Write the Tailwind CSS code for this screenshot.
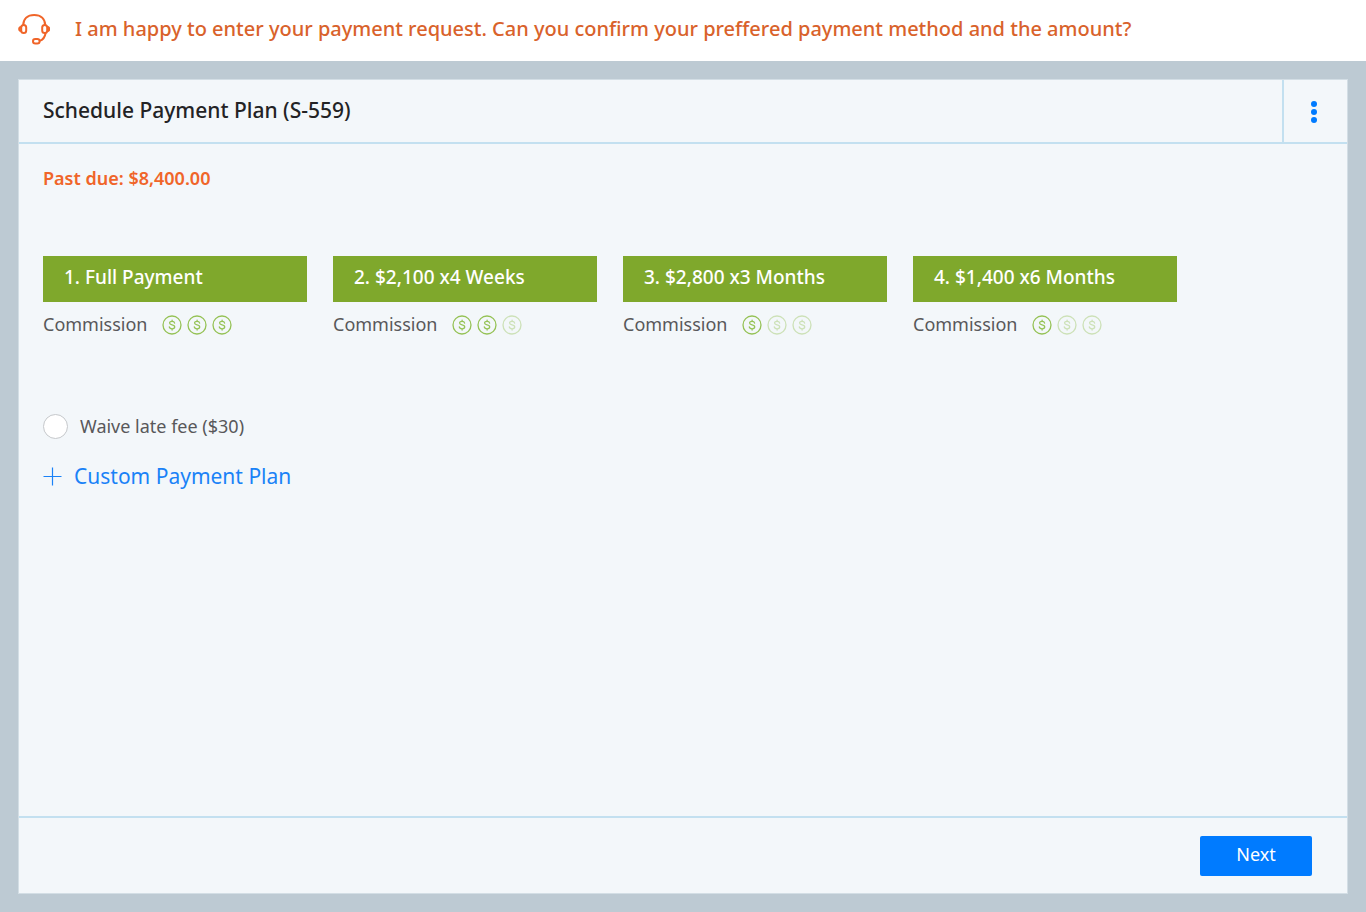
<!DOCTYPE html>
<html lang="en">

<head>
    <meta charset="UTF-8">
    <meta name="viewport" content="width=device-width, initial-scale=1.0">
    <title>Schedule Payment Plan</title>
    <script src="https://cdn.jsdelivr.net/npm/@tailwindcss/browser@4"></script>
</head>

<body class="min-h-screen flex flex-col bg-[#bdcad3] font-['Noto_Sans','Open_Sans',sans-serif] text-lg text-[#58585a]">
    <!-- icons used more than once -->
    <svg class="hidden">
        <symbol id="coin" viewBox="0 0 20 20" fill="none" stroke="currentColor" stroke-linecap="round">
            <circle cx="10" cy="10" r="9" stroke-width="1.3" />
            <path stroke-width="1.3" d="M12.6 8C12.4 6.9 11.5 6.3 10.1 6.3C8.6 6.3 7.6 7 7.6 8.1C7.6 9.2 8.5 9.6 10.1 9.9C11.8 10.2 12.7 10.8 12.7 12C12.7 13.1 11.6 13.8 10.1 13.8C8.5 13.8 7.5 13.1 7.3 11.9M10.1 5.1V6.3M10.1 13.8V15" />
        </symbol>
    </svg>

    <header class="h-[61px] shrink-0 bg-white flex items-center pl-[18px] pb-1">
        <svg class="size-8 shrink-0" viewBox="0 0 32 32" fill="none" stroke="#f06529" stroke-width="2">
            <path d="M5.2 12.5C5.2 6 9.5 2 16.2 2S27.2 6 27.2 12.5" />
            <rect x="3.2" y="12" width="5" height="8" rx="2.5" />
            <rect x="24.2" y="12" width="5" height="8" rx="2.5" />
            <path stroke-width="2.4" d="M3 13.8C1.8 14.2 1.3 14.9 1.3 16S1.8 17.8 3 18.2M29.4 13.8C30.6 14.2 31.1 14.9 31.1 16S30.6 17.8 29.4 18.2" />
            <path d="M27.6 20C27 24 25 26.9 21.6 27.9" />
            <rect x="15" y="26" width="6.6" height="4.6" rx="2.3" />
        </svg>
        <p class="ml-[25px] text-xl leading-7 font-medium text-[#d9622b]">I am happy to enter your payment request. Can you confirm your preffered payment method and the amount?</p>
    </header>

    <main class="flex-1 flex flex-col p-[18px]">
        <section class="flex-1 flex flex-col bg-[#f3f7fa] border border-[#d3dee5]">
            <div class="h-16 flex border-b-2 border-[#c3e0f0]">
                <h1 class="flex-1 pl-6 pb-[2px] flex items-center text-[21px] font-medium text-[#232325]">Schedule Payment Plan (S-559)</h1>
                <button type="button" aria-label="More options" class="w-[65px] pr-1 pt-px border-l-2 border-[#c3e0f0] flex justify-center items-center">
                    <svg class="w-[6px] h-[22px]" viewBox="0 0 6 22" fill="#007bff">
                        <circle cx="3" cy="3" r="3" />
                        <circle cx="3" cy="11" r="3" />
                        <circle cx="3" cy="19" r="3" />
                    </svg>
                </button>
            </div>

            <div class="flex-1 px-6 pt-5">
                <p class="leading-7 font-semibold text-[#f06529]">Past due: $8,400.00</p>

                <div class="mt-16 flex flex-wrap gap-[26px]">
                    <div class="w-[264px]">
                        <button type="button" class="w-full h-[46px] pl-[21px] pb-[2px] bg-[#7fa82c] text-left text-[19px] font-medium text-white">1. Full Payment</button>
                        <div class="mt-2 flex items-center gap-[15px]">
                            <span class="leading-7">Commission</span>
                            <span class="flex gap-[5px] pt-px text-[#95c255]">
                                <svg class="size-5"><use href="#coin" /></svg>
                                <svg class="size-5"><use href="#coin" /></svg>
                                <svg class="size-5"><use href="#coin" /></svg>
                            </span>
                        </div>
                    </div>
                    <div class="w-[264px]">
                        <button type="button" class="w-full h-[46px] pl-[21px] pb-[2px] bg-[#7fa82c] text-left text-[19px] font-medium text-white">2. $2,100 x4 Weeks</button>
                        <div class="mt-2 flex items-center gap-[15px]">
                            <span class="leading-7">Commission</span>
                            <span class="flex gap-[5px] pt-px text-[#95c255]">
                                <svg class="size-5"><use href="#coin" /></svg>
                                <svg class="size-5"><use href="#coin" /></svg>
                                <svg class="size-5 opacity-40"><use href="#coin" /></svg>
                            </span>
                        </div>
                    </div>
                    <div class="w-[264px]">
                        <button type="button" class="w-full h-[46px] pl-[21px] pb-[2px] bg-[#7fa82c] text-left text-[19px] font-medium text-white">3. $2,800 x3 Months</button>
                        <div class="mt-2 flex items-center gap-[15px]">
                            <span class="leading-7">Commission</span>
                            <span class="flex gap-[5px] pt-px text-[#95c255]">
                                <svg class="size-5"><use href="#coin" /></svg>
                                <svg class="size-5 opacity-40"><use href="#coin" /></svg>
                                <svg class="size-5 opacity-40"><use href="#coin" /></svg>
                            </span>
                        </div>
                    </div>
                    <div class="w-[264px]">
                        <button type="button" class="w-full h-[46px] pl-[21px] pb-[2px] bg-[#7fa82c] text-left text-[19px] font-medium text-white">4. $1,400 x6 Months</button>
                        <div class="mt-2 flex items-center gap-[15px]">
                            <span class="leading-7">Commission</span>
                            <span class="flex gap-[5px] pt-px text-[#95c255]">
                                <svg class="size-5"><use href="#coin" /></svg>
                                <svg class="size-5 opacity-40"><use href="#coin" /></svg>
                                <svg class="size-5 opacity-40"><use href="#coin" /></svg>
                            </span>
                        </div>
                    </div>
                </div>

                <div class="mt-[74px] flex items-center gap-3">
                    <input id="waive" type="radio" class="appearance-none size-[25px] rounded-full border border-[#c5c8cb] bg-white checked:border-8 checked:border-[#007bff]">
                    <label for="waive" class="leading-7">Waive late fee ($30)</label>
                </div>

                <a href="#" class="mt-5 inline-flex items-center gap-3 text-[21px] leading-8 text-[#1a82f7]">
                    <svg class="size-[19px]" viewBox="0 0 19 19" fill="none" stroke="currentColor" stroke-width="1.2">
                        <path d="M9.5 .5V18.5M.5 9.5H18.5" />
                    </svg>
                    Custom Payment Plan
                </a>
            </div>

            <footer class="h-[77px] shrink-0 border-t-2 border-[#c3e0f0] flex items-center justify-end pr-[35px]">
                <button type="button" class="w-28 h-10 pb-1 rounded-xs bg-[#007bff] text-white">Next</button>
            </footer>
        </section>
    </main>
</body>

</html>
